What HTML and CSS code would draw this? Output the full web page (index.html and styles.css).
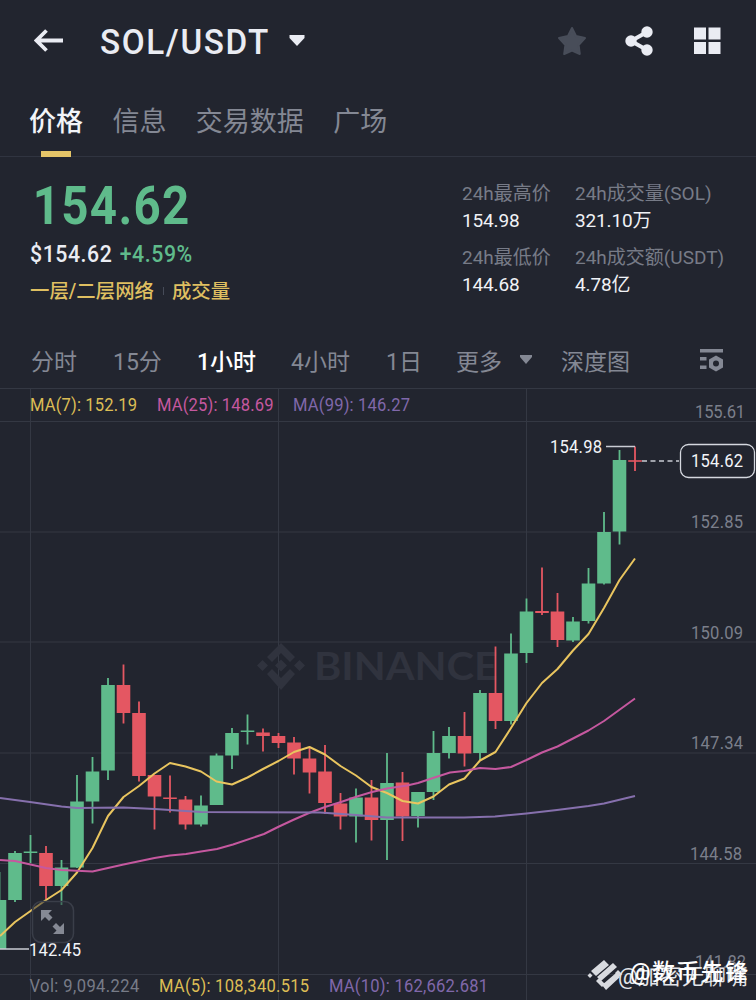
FILE: index.html
```html
<!DOCTYPE html>
<html lang="zh-CN">
<head>
<meta charset="utf-8">
<title>SOL/USDT</title>
<link rel="stylesheet" href="styles.css">
</head>
<body>
<header class="topbar">
  <svg class="back" width="30" height="24" viewBox="0 0 30 24"><path d="M29 11.500H3M12.500 1.500L2.500 11.500l10 10" fill="none" stroke="currentColor" stroke-width="3.800"/></svg>
  <h1 class="pair">SOL/USDT</h1>
  <svg class="caret" width="16" height="13" viewBox="0 0 16 13"><path d="M0.500 0h15v3L8 11 .5 3z" fill="currentColor"/></svg>
  <div class="actions">
    <svg class="star" width="30" height="30" viewBox="0 0 30 30"><path d="M15 2l4 8 9 2-6.400 7 1.200 9L15 24.500 7.200 28l1.200-9L2 12l9-2z" fill="currentColor" stroke="currentColor" stroke-width="2" stroke-linejoin="round"/></svg>
    <svg class="share" width="30" height="30" viewBox="0 0 30 30"><path d="M23 6L7 15l16 9" fill="none" stroke="currentColor" stroke-width="4"/><circle cx="23" cy="6" r="5.700" fill="currentColor"/><circle cx="7" cy="15" r="5.700" fill="currentColor"/><circle cx="23" cy="24" r="5.700" fill="currentColor"/></svg>
    <svg width="28" height="28" viewBox="0 0 28 28"><path d="M1 .5h12v12H1zM15.500 .5h12v12h-12zM1 15h12v12H1zM15.500 15h12v12h-12z" fill="currentColor"/></svg>
  </div>
</header>
<nav class="tabs">
  <span class="tab active">价格</span><span class="tab">信息</span><span class="tab">交易数据</span><span class="tab">广场</span>
</nav>
<section class="summary">
  <div class="quote">
    <div class="last">154.62</div>
    <div class="fiat"><span>$154.62</span><span class="up">+4.59%</span></div>
    <div class="tags"><span>一层/二层网络</span><i class="sep"></i><span>成交量</span></div>
  </div>
  <dl class="stats">
    <div><dt>24h最高价</dt><dd>154.98</dd></div>
    <div><dt>24h成交量(SOL)</dt><dd>321.10万</dd></div>
    <div><dt>24h最低价</dt><dd>144.68</dd></div>
    <div><dt>24h成交额(USDT)</dt><dd>4.78亿</dd></div>
  </dl>
</section>
<nav class="intervals">
  <span>分时</span><span>15分</span><span class="active">1小时</span><span>4小时</span><span>1日</span><span>更多</span>
  <svg width="14" height="11" viewBox="0 0 14 11"><path d="M1 1h12v2L7 10 1 3z" fill="currentColor"/></svg>
  <span>深度图</span>
  <svg width="26" height="24" viewBox="0 0 26 24"><path d="M2 1h23v3.500H2zM2 9h6.500v3.500H2zM2 17.500h6.500V21H2z" fill="currentColor"/><path d="M18 7.500l7 4v8l-7 4-7-4v-8zM18 12.500a3 3 0 1 0 0 6 3 3 0 0 0 0-6z" fill="currentColor" fill-rule="evenodd"/></svg>
</nav>
<svg class="chart" id="chart" width="756" height="612" viewBox="0 388 756 612">
  <g class="grid">
    <path d="M0 388.500H756M0 421.500H756M0 532H756M0 642H756M0 753H756M0 863.500H756M0 974.500H756M30.500 388V1000M278.500 388V1000M526.500 388V1000"/>
  </g>
  <g class="brand">
    <path d="M267 657L281 643l14 14-5 5-9-9-9 9zM267 674l5-5 9 9 9-9 5 5-14 16zM257 665.500l5.500-5.500 5.500 5.500-5.500 5.500zM275 665.500l6-6 6 6-6 6zM294 665.500l5.500-5.500 5.500 5.500-5.500 5.500z"/>
    <text x="314" y="679.500" textLength="184" lengthAdjust="spacingAndGlyphs">BINANCE</text>
  </g>
  <g id="candles"></g>
  <polyline class="ma7" points="0,936 15,922 46,900 61.500,890 77,872.500 92.500,848 108,816 123.500,797 139,786 154.500,773.500 170,763 185.500,766.500 201,771.500 216.500,781.500 232,784.500 247.500,777.500 263,769 278.500,761 294,752 309.500,747 325,754.500 340.500,766 356,775.500 371.500,787 387,793 402.500,801 418,803.500 433.500,796.500 449,784.500 464.500,778.500 480,760.500 495.500,752 511,728 526.500,703 542,683 557.500,669 573,650.500 588.500,634 604,608 619.500,580 635,558.500"/>
  <polyline class="ma25" points="0,860 15,861 46,868 61.500,870 92.500,871.500 123.500,864.500 154.500,858 170,855.500 186,854 201,851.500 217,849 233,844.500 264,834 278,827 293,820 309,813 325,807 341,802 357,796.500 372,792 387,788.500 407,785.500 418,783 433,778 450,772.500 464,771 480,768 495.500,769 511,767 526.500,760 542,752.500 557.500,746.500 588.500,730.500 604,721 635,698.500"/>
  <polyline class="ma99" points="0,798 30,802 61.500,806.500 77,808 123.500,807.500 154.500,809 201,812 320,812.500 356,815 387,817.500 464,817.500 495,816.500 526.500,813.500 557,810 588.500,806 604,803.500 635,796"/>
  <g class="legend narrow">
    <text class="c7" x="30" y="411" textLength="113">MA(7): 152.19</text>
    <text class="c25" x="157" y="411" textLength="123">MA(25): 148.69</text>
    <text class="c99" x="293" y="411" textLength="123.500">MA(99): 146.27</text>
    <text class="dim" x="29.500" y="992" textLength="116">Vol: 9,094.224</text>
    <text class="c7" x="159" y="992" textLength="158.500">MA(5): 108,340.515</text>
    <text class="c99" x="329" y="992" textLength="168">MA(10): 162,662.681</text>
  </g>
  <g class="axis narrow">
    <text x="695" y="418" textLength="53">155.61</text>
    <text x="691" y="528.500" textLength="55">152.85</text>
    <text x="691" y="639" textLength="55">150.09</text>
    <text x="691" y="749.500" textLength="55">147.34</text>
    <text x="690" y="860" textLength="55">144.58</text>
    <text x="695" y="968" textLength="54">141.82</text>
  </g>
  <g class="marks narrow">
    <path d="M606 446.500h29M0 949h29"/>
    <path d="M642 461h37" stroke-dasharray="5 3.500"/>
    <rect x="680.500" y="444.500" width="74" height="33" rx="8"/>
    <text x="550" y="453.500" textLength="55">154.98</text>
    <text x="691" y="467.500" textLength="55">154.62</text>
    <text x="29" y="956.500" textLength="55">142.45</text>
  </g>
  <g class="expand">
    <rect x="32.500" y="901.500" width="41" height="41" rx="9"/>
    <path d="M41 910h11l-3.500 3.500 4 4-3.500 3.500-4-4-4 4zM64 934H53l3.500-3.500-4-4L56 923l4 4 4-4z"/>
  </g>
  <g class="credit">
    <path d="M591 971l13-11 5 5-13 11zM597 977l16-14 4 4-16 14zM602 985l14-12 4 4-14 13zM596 981l3-3 6 6-3 3zM587.500 975.500l2.500-2.500 2.500 2.500-2.500 2.500zM615 973l3-3 4 4-3 3z"/>
    <text class="under" x="618" y="984" textLength="130">@加密无聊嘴</text>
    <text x="630" y="980" textLength="118">@数币先锋</text>
  </g>
</svg>
<script src="chart.js"></script>
</body>
</html>
```
FILE: styles.css
```css
* { box-sizing: border-box; }
body {
  margin: 0;
  width: 756px;
  height: 1000px;
  overflow: hidden;
  background: #22252f;
  color: #eaecf3;
  font-family: Roboto, "Noto Sans CJK SC", sans-serif;
}
svg { display: block; flex: none; }
.topbar { display: flex; align-items: center; height: 82px; padding: 0 35px 0 34px; }
.pair { margin: 3px 0 0 36px; width: 170px; font-size: 35px; font-weight: 500; line-height: 40px; letter-spacing: 1.7px; white-space: nowrap; transform: scaleX(.95); transform-origin: left; }
.caret { margin-left: 19px; }
.actions { display: flex; align-items: center; margin-left: auto; }
.share { margin: 0 39px 0 37px; }
.star { color: #484d59; }
.tabs { display: flex; gap: 29.4px; height: 75px; padding-left: 29px; border-bottom: 1px solid #303440; font-size: 27px; color: #848894; }
.tab { position: relative; height: 75px; line-height: 80px; }
.tab.active { color: #f2f4f8; font-weight: 500; }
.tab.active::after { content: ""; position: absolute; left: 12px; bottom: 0; width: 30px; height: 6px; background: #e5c568; }
.summary { display: flex; height: 177px; padding: 23px 0 0 30px; }
.quote { width: 432px; white-space: nowrap; }
.last { height: 52px; padding-left: 3px; font-size: 54px; font-weight: 700; line-height: 52px; letter-spacing: 1.5px; color: #5fbb8b; transform: scaleX(.88); transform-origin: left; }
.fiat { display: flex; gap: 8px; height: 44px; font-size: 23px; font-weight: 500; line-height: 46px; letter-spacing: .6px; transform: scaleX(.925); transform-origin: left; }
.up { color: #5fbb8b; }
.tags { display: flex; align-items: center; height: 27px; font-size: 19.4px; font-weight: 500; color: #dfbf61; }
.sep { width: 1px; height: 8px; margin: 3px 8px 0 9px; background: #464b58; }
.stats { display: grid; grid-template-columns: 113px 180px; grid-auto-rows: 64px; margin: 0; white-space: nowrap; font-size: 19px; }
.stats dt { height: 27px; line-height: 28px; color: #777b87; }
.stats dd { height: 27px; margin: 0; line-height: 28px; color: #f0f2f6; letter-spacing: -.15px; }
.intervals { display: grid; grid-template-columns: 82px 84px 94px 95px 70px 63px 42px 137px 28px; align-items: center; height: 54px; padding: 0 0 3px 31px; font-size: 23px; color: #848894; white-space: nowrap; }
.intervals .active { color: #fff; font-weight: 500; }
.chart { font-size: 17.5px; }
.narrow text { transform-box: fill-box; transform-origin: left; transform: scaleX(.947); }
.grid path { fill: none; stroke: #343843; stroke-width: 1; }
.brand { fill: #30333e; font: 700 38px Lato, sans-serif; }
.green { fill: #5fbb8b; }
.red { fill: #e45762; }
polyline { fill: none; stroke-width: 2; stroke-linejoin: round; }
.ma7 { stroke: #e9c55f; }
.ma25 { stroke: #c5589f; }
.ma99 { stroke: #8670ad; }
.c7 { fill: #dcbd55; }
.c25 { fill: #c5589f; }
.c99 { fill: #8068aa; }
.dim { fill: #777b87; }
.axis { fill: #7b7f8b; }
.marks path { fill: none; stroke: #c9ccd4; stroke-width: 1.5; }
.marks rect { fill: #22252f; stroke: #d5d8df; stroke-width: 1.3; }
.marks text { fill: #f2f4f8; }
.expand rect { fill: #282b35; fill-opacity: .5; stroke: #3a3e49; stroke-width: 1.5; }
.expand path { fill: #858994; }
.credit { fill: #fff; font-size: 23px; font-weight: 500; }
.credit path { fill: #d8dadf; }
.credit .under { font-size: 22px; font-weight: 400; fill: #e2e4e8; }
```
FILE: chart.js
```js
// Each candle: [centre x, direction, high, body top, body bottom, low]
const candles = [
  [-0.5,"green",872,900,949,949],[15,"green",851,853,900,902],[30.5,"green",835,851.5,853,863],
  [46,"red",846,853,886,899],[61.5,"green",860,867.5,886,905],[77,"green",775,801.5,867.5,868],
  [92.5,"green",757,771.5,801.5,823.5],[108,"green",678,685,770.5,780],[123.5,"red",664.5,685,713,723.5],
  [139,"red",701.5,713,776,781.5],[154.5,"red",775,775,796.5,829.5],[170,"red",775.5,797.5,799,812.5],
  [185.5,"red",796,799.5,824.5,829.5],[201,"green",795.5,805.5,824.5,826.5],[216.5,"green",753.5,755.5,805,805],
  [232,"green",728,733,755.5,769],[247.5,"green",714.5,730.5,732,744.5],[263,"red",728.5,732.5,736,751.5],
  [278.5,"red",733,736,743,748],[294,"red",737,742.5,758.5,774.5],[309.5,"red",748,758.5,772.5,793.5],
  [325,"red",745,771.5,803,814],[340.5,"red",793,803.5,816.5,829.5],[356,"green",788.5,797.5,816.5,842.5],
  [371.5,"red",780,797.5,820,840.5],[387,"green",753,783,820,860],[402.5,"red",772,782.5,816.5,841],
  [418,"green",792,792,816,827.5],[433.5,"green",731,753,792,800],[449,"green",727,736,753,758.5],
  [464.5,"red",712,736,753.5,766.5],[480,"green",690,693,753,760.5],[495.5,"red",646.5,693,721,729],
  [511,"green",633.5,653.5,721,724.5],[526.5,"green",598.5,611.5,653,663],[542,"red",567.5,611,613,615],
  [557.5,"red",593,611.5,640,647],[573,"green",617,621.5,640.5,642],[588.5,"green",568,583.5,621,623.5],
  [604,"green",512,532,583.5,584.5],[619.5,"green",450,460,531.5,544.5],[635,"red",446.5,460.2,461.8,471]
];
const layer = document.getElementById("candles");
const bar = (cls, x, y, w, h) => {
  const r = document.createElementNS("http://www.w3.org/2000/svg", "rect");
  r.setAttribute("class", cls);
  r.setAttribute("x", x);
  r.setAttribute("y", y);
  r.setAttribute("width", w);
  r.setAttribute("height", h);
  layer.appendChild(r);
};
for (const [x, cls, high, top, bottom, low] of candles) {
  bar(cls, x - 0.9, high, 1.8, low - high);
  bar(cls, x - 6.8, top, 13.6, bottom - top);
}
```
